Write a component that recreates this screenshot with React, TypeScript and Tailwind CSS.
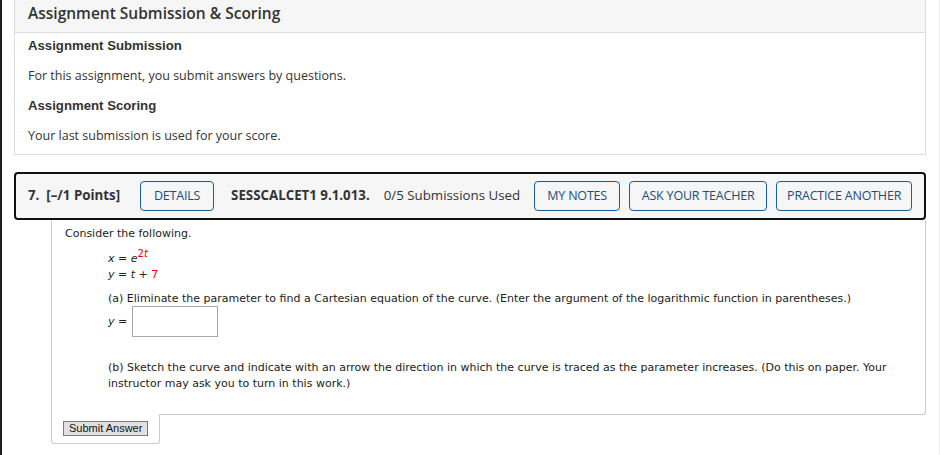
const BUTTONS_RIGHT: { label: string; w: string }[] = [
  { label: "MY NOTES", w: "w-[86px]" },
  { label: "ASK YOUR TEACHER", w: "w-[138px]" },
  { label: "PRACTICE ANOTHER", w: "w-[136px]" },
];

function OutlineButton({ label, w }: { label: string; w: string }) {
  return (
    <span
      className={`${w} inline-flex items-center justify-center h-[30px] rounded-[4px] border border-[#15609a] bg-[#f6f6f6] text-[12.5px] tracking-[-0.2px] text-[#174e80] [font-family:'Open_Sans',sans-serif]`}
    >
      {label}
    </span>
  );
}

export default function App() {
  return (
    <div className="h-[455px] w-[940px] overflow-hidden bg-white border-l-2 border-[#1e1e1e] border-r border-r-[#ececec] [font-family:'Open_Sans',sans-serif] text-[#333]">
      <div className="ml-[12px] w-[912px]">
        {/* Assignment Submission & Scoring */}
        <section className="border-x border-b border-[#dddddd]">
          <div className="h-[33px] bg-[#f6f6f6] border-b border-[#dddddd] pl-[13px] flex items-center">
            <h2 className="text-[15.5px] font-semibold text-[#333] -mt-[4px]">Assignment Submission &amp; Scoring</h2>
          </div>
          <div className="pl-[13px] pb-[8px]">
            <h3 className="pt-[3px] text-[13.2px] font-bold text-[#333] [font-family:'Liberation_Sans',Arial,sans-serif]">
              Assignment Submission
            </h3>
            <p className="mt-[11px] text-[12.5px] text-[#333]">For this assignment, you submit answers by questions.</p>
            <h3 className="mt-[10px] text-[13.2px] font-bold text-[#333] [font-family:'Liberation_Sans',Arial,sans-serif]">
              Assignment Scoring
            </h3>
            <p className="mt-[12px] text-[12.5px] text-[#333]">Your last submission is used for your score.</p>
          </div>
        </section>

        {/* Question header */}
        <div className="mt-[17px] h-[48px] border-2 border-[#111] rounded-[4px] bg-[#f6f6f6] flex items-center pl-[12px] text-[13.3px]">
          <span className="font-bold text-[#333]">7.&nbsp; [–/1 Points]</span>
          <span className="ml-[20px] flex">
            <OutlineButton label="DETAILS" w="w-[74px]" />
          </span>
          <span className="ml-[17px] font-bold text-[#333]">SESSCALCET1 9.1.013.</span>
          <span className="ml-[14px] text-[#333]">0/5 Submissions Used</span>
          <span className="ml-[14px] flex gap-[9px]">
            {BUTTONS_RIGHT.map((b) => (
              <OutlineButton key={b.label} label={b.label} w={b.w} />
            ))}
          </span>
        </div>

        {/* Question body */}
        <div className="ml-[37px] [font-family:'DejaVu_Sans',Verdana,sans-serif] text-[11px] text-[#222] leading-[16px]">
          <div className="border-x border-b border-[#cccccc] rounded-br-[3px] pl-[13px] pt-[6px] pb-[22px]">
            <p>Consider the following.</p>
            <div className="ml-[43px] mt-[9px]">
              <div>
                <i>x</i> = <i>e</i>
                <sup className="text-[#e00] text-[10px] -top-[5px]">
                  2<i>t</i>
                </sup>
              </div>
              <div>
                <i>y</i> = <i>t</i> + <span className="text-[#e00]">7</span>
              </div>
              <p className="mt-[8px]">
                (a) Eliminate the parameter to find a Cartesian equation of the curve. (Enter the argument of the
                logarithmic function in parentheses.)
              </p>
              <div className="-mt-[1px] flex items-center gap-[5px]">
                <span>
                  <i>y</i> =
                </span>
                <span className="inline-block w-[86px] h-[31px] border border-[#a9a9a9] bg-white" />
              </div>
              <p className="mt-[23px] pr-[30px]">
                (b) Sketch the curve and indicate with an arrow the direction in which the curve is traced as the
                parameter increases. (Do this on paper. Your instructor may ask you to turn in this work.)
              </p>
            </div>
          </div>
          <div className="-mt-px w-[109px] h-[30px] bg-white border-x border-b border-[#cccccc] rounded-b-[3px] pl-[11px] pt-[7px]">
            <button className="block h-[15px] px-[5px] bg-[#e1e1e1] border border-[#7a7a7a] text-[11px] leading-[13px] text-[#111] [font-family:'Liberation_Sans',Arial,sans-serif]">
              Submit Answer
            </button>
          </div>
        </div>
      </div>
    </div>
  );
}
